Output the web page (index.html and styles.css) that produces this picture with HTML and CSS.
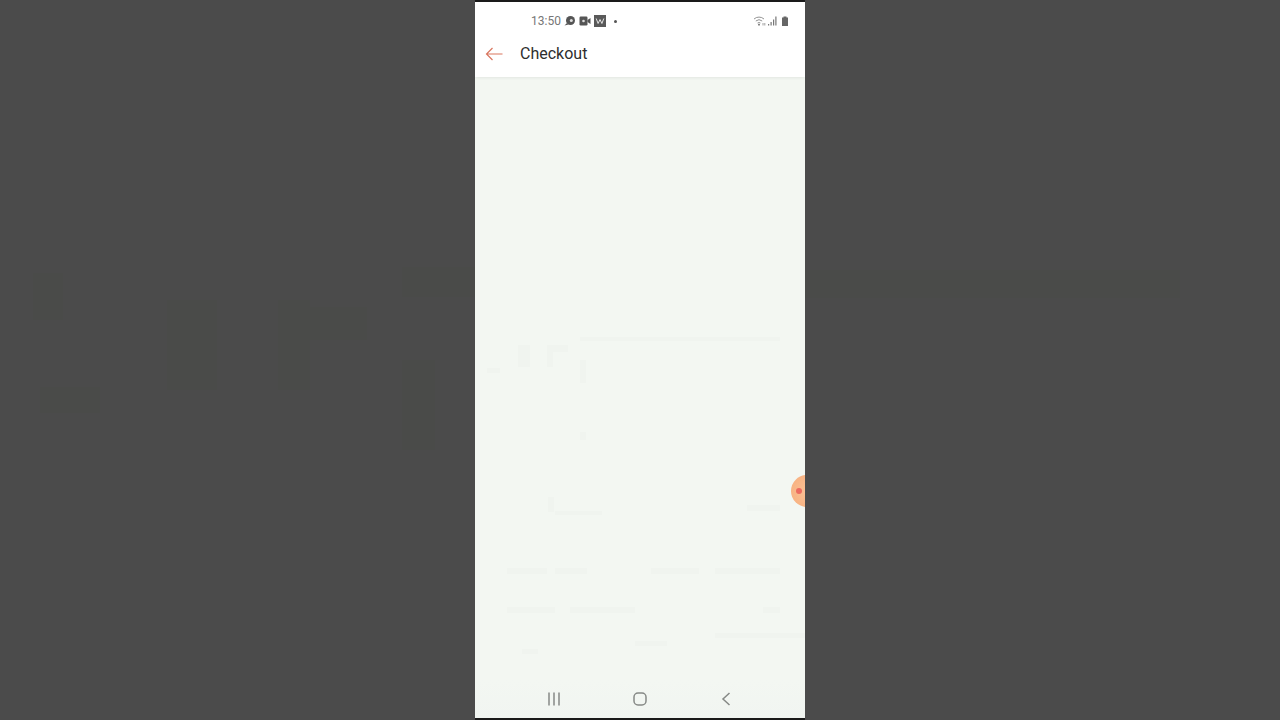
FILE: index.html
```html
<!DOCTYPE html>
<html lang="en">
<head>
<meta charset="utf-8">
<title>Checkout</title>
<link rel="stylesheet" href="styles.css">
</head>
<body>
<main class="phone">
  <div class="status">
    <div class="status-left">
      <span class="time">13:50</span>
      <svg class="ic" viewBox="0 0 12 12"><circle cx="6.500" cy="5.500" r="4.500" fill="#555"/><path d="M3 8l-2.500 2.500 4-1z" fill="#555"/><circle cx="7.300" cy="5.500" r="1.500" fill="#ddd"/></svg>
      <svg class="ic" viewBox="0 0 12 12"><rect x="0.500" y="1.500" width="8" height="9" rx="1.200" fill="#555"/><path d="M8.500 5l3-2v6l-3-2z" fill="#555"/><circle cx="4.500" cy="6" r="1.300" fill="#ddd"/></svg>
      <svg class="ic" viewBox="0 0 12 12"><rect x="0" y="0" width="12" height="12" fill="#5a5a5a"/><path d="M2.200 3.500l1.900 5 1.900-4 1.900 4 1.900-5" fill="none" stroke="#e4e4e4" stroke-width="1"/></svg>
      <span class="dot"></span>
    </div>
    <div class="status-right">
      <svg class="ic-wifi" viewBox="0 0 13 10"><path d="M1 3a7.500 7.500 0 0 1 10 0M2.800 5a5 5 0 0 1 6.400 0M4.600 7a2.500 2.500 0 0 1 2.800 0" fill="none" stroke="#888" stroke-width="0.900"/><circle cx="6" cy="8.700" r="0.900" fill="#666"/><path d="M10 7v2.500M11.800 7v2.500" stroke="#888" stroke-width="0.800"/></svg>
      <svg class="ic-signal" viewBox="0 0 10 10"><path d="M1 8h1.200v1.500H1zM3.500 6h1.200v3.500H3.500zM6 3.500h1.200v6H6zM8.300 0.500h1.200v9H8.300z" fill="#777"/></svg>
      <svg class="ic-batt" viewBox="0 0 8 10"><path d="M2.500 0.500h3v1h1.500v8.500H1V1.500h1.500z" fill="#666"/></svg>
    </div>
  </div>
  <header class="appbar">
    <svg class="back" viewBox="0 0 18 14"><path d="M17.500 7H1.500M7.500 1L1.500 7l6 6" fill="none" stroke="#d9765f" stroke-width="1.200"/></svg>
    <h1 class="title">Checkout</h1>
  </header>
  <section class="content">
    <div class="fab"><span class="fab-dot"></span></div>
  </section>
  <nav class="navbar">
    <svg class="nav-ic" viewBox="0 0 14 14"><path d="M2 .5v13M7 .5v13M12 .5v13" fill="none" stroke="#868986" stroke-width="1.500"/></svg>
    <svg class="nav-ic" viewBox="0 0 14 14"><rect x="1" y="1" width="12" height="12" rx="4" fill="none" stroke="#868986" stroke-width="1.500"/></svg>
    <svg class="nav-ic" viewBox="0 0 14 14"><path d="M10.500 1L4 7l6.500 6" fill="none" stroke="#868986" stroke-width="1.500"/></svg>
  </nav>
</main>
</body>
</html>
```
FILE: styles.css
```css
* { box-sizing: border-box; }
html, body { margin: 0; height: 100%; }
body {
  --s: linear-gradient(#4a4b49, #4a4b49);
  background:
    var(--s) 33px 273px / 30px 47px no-repeat,
    var(--s) 167px 300px / 50px 90px no-repeat,
    var(--s) 278px 300px / 32px 90px no-repeat,
    var(--s) 310px 307px / 57px 33px no-repeat,
    var(--s) 402px 267px / 73px 30px no-repeat,
    var(--s) 402px 360px / 33px 90px no-repeat,
    var(--s) 40px 387px / 60px 26px no-repeat,
    var(--s) 805px 270px / 375px 28px no-repeat,
    #4b4b4b;
  display: flex;
  justify-content: center;
  font-family: "Roboto", "Noto Sans", sans-serif;
  overflow: hidden;
}
.phone {
  width: 330px;
  height: 720px;
  display: flex;
  flex-direction: column;
  background: #f3f7f2;
  border-top: 2px solid #1a1a1a;
  border-bottom: 2px solid #1a1a1a;
}
.status {
  height: 36px;
  flex: none;
  background: #fff;
  display: flex;
  align-items: center;
  justify-content: space-between;
  padding: 2px 16px 0 56px;
}
.status-left, .status-right { display: flex; align-items: center; }
.status-left { gap: 3px; }
.status-right { gap: 1px; }
.time { font-size: 12px; color: #777; margin-right: 0; }
.ic { width: 12px; height: 12px; }
.dot { width: 3px; height: 3px; border-radius: 50%; background: #555; margin-left: 5px; }
.ic-wifi { width: 13px; height: 10px; }
.ic-signal { width: 10px; height: 10px; }
.ic-batt { width: 8px; height: 10px; margin-left: 3px; }
.appbar {
  height: 39px;
  flex: none;
  background: #fff;
  display: flex;
  align-items: center;
  padding: 0 0 8px 10px;
  gap: 17px;
  box-shadow: 0 2px 3px -1px rgba(0, 0, 0, 0.07);
}
.back { width: 18px; height: 14px; }
.title { margin: 0; font-size: 16px; font-weight: 400; color: #2e2e2e; }
.content {
  --g: linear-gradient(#f0f4ef, #f0f4ef);
  flex: 1;
  position: relative;
  overflow: hidden;
  background:
    var(--g) 105px 260px / 200px 4px no-repeat,
    var(--g) 105px 283px / 6px 23px no-repeat,
    var(--g) 43px 268px / 12px 22px no-repeat,
    var(--g) 72px 268px / 6px 22px no-repeat,
    var(--g) 72px 268px / 21px 7px no-repeat,
    var(--g) 12px 291px / 13px 5px no-repeat,
    var(--g) 105px 355px / 6px 8px no-repeat,
    var(--g) 73px 420px / 6px 15px no-repeat,
    var(--g) 80px 434px / 47px 4px no-repeat,
    var(--g) 272px 428px / 33px 6px no-repeat,
    var(--g) 32px 491px / 40px 6px no-repeat,
    var(--g) 80px 491px / 32px 6px no-repeat,
    var(--g) 176px 491px / 48px 6px no-repeat,
    var(--g) 240px 491px / 65px 6px no-repeat,
    var(--g) 32px 530px / 48px 6px no-repeat,
    var(--g) 95px 530px / 65px 6px no-repeat,
    var(--g) 288px 530px / 17px 6px no-repeat,
    var(--g) 240px 556px / 90px 5px no-repeat,
    var(--g) 160px 564px / 32px 5px no-repeat,
    var(--g) 47px 572px / 16px 5px no-repeat;
}
.fab {
  position: absolute;
  left: 316px;
  top: 398px;
  width: 32px;
  height: 32px;
  border-radius: 50%;
  background: radial-gradient(circle at 55% 50%, #fbc296 0%, #f8b484 70%, #f6aa77 100%);
  display: flex;
  align-items: center;
  padding-left: 5px;
}
.fab-dot { width: 6px; height: 6px; border-radius: 50%; background: #ec6b5f; }
.navbar {
  height: 38px;
  flex: none;
  background: linear-gradient(#f3f7f2, #f1f5f1);
  display: flex;
  justify-content: center;
  align-items: center;
  gap: 72px;
}
.nav-ic { width: 14px; height: 14px; }
```
